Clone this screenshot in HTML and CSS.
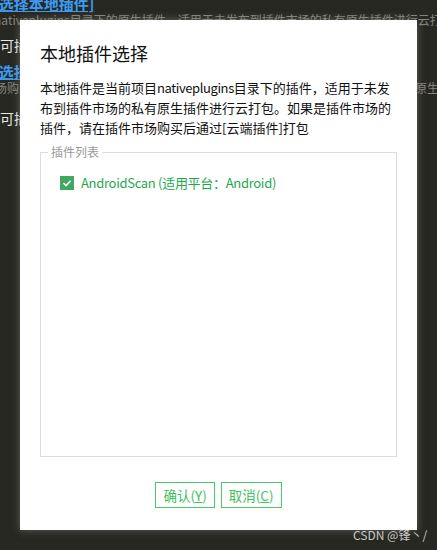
FILE: index.html
```html
<!DOCTYPE html>
<html lang="zh-CN">
  <head>
    <meta charset="UTF-8" />
    <meta name="viewport" content="width=device-width, initial-scale=1.0" />
    <title>本地插件选择</title>
    <link rel="stylesheet" href="styles.css">
  </head>
  <body>
    <div class="page">
      <div class="link first">[选择本地插件]</div>
      <div class="note">nativeplugins目录下的原生插件，适用于未发布到插件市场的私有原生插件进行云打包。</div>
      <div class="label">可插件</div>
      <div class="link">[选择云端插件]</div>
      <div class="note later">场购买后通过云端插件进行打包，已购买的插件会显示在插件的云端列表中，与原生插件</div>
      <div class="label">可插件</div>
    </div>

    <div class="dialog">
      <div class="title">本地插件选择</div>
      <div class="desc">
        本地插件是当前项目<span class="en">nativeplugins</span>目录下的插件，适用于未发布到插件市场的私有原生插件进行云打包。如果是插件市场的插件，请在插件市场购买后通过[云端插件]打包
      </div>
      <fieldset class="list">
        <legend>插件列表</legend>
        <label class="item">
          <span class="check">
            <svg width="14" height="14" viewBox="0 0 14 14">
              <path d="M3.5 7.2 L6 9.6 L10.6 4.8" fill="none" stroke="#fff" stroke-width="1.6" />
            </svg>
          </span>
          AndroidScan (适用平台：Android)
        </label>
      </fieldset>
      <div class="actions">
        <button class="btn">确认(<u>Y</u>)</button>
        <button class="btn">取消(<u>C</u>)</button>
      </div>
    </div>

    <div class="mark">CSDN @锋丶/</div>
  </body>
</html>
```

FILE: styles.css
```css
body {
  margin: 0;
  padding: 0;
  width: 437px;
  height: 550px;
  overflow: hidden;
  position: relative;
  background: #272822;
  font-family: "Noto Sans CJK SC", "Noto Sans", sans-serif;
}

.page {
  white-space: nowrap;
  overflow: hidden;
  font-size: 14px;
}

.link {
  margin: 11px 0 0 -7px;
  line-height: 16px;
  font-size: 15px;
  font-weight: bold;
  color: #3c9cf0;
  text-decoration: underline;
}

.link.first {
  margin-top: -4px;
}

.note {
  margin-left: -6px;
  line-height: 16px;
  font-size: 12px;
  color: #85857f;
}

.note.later {
  margin-left: -5px;
}

.label {
  margin-top: 9px;
  line-height: 16px;
  color: #e8e8e2;
}

.label:last-child {
  margin-top: 14px;
}

.dialog {
  position: absolute;
  left: 20px;
  top: 20px;
  width: 397px;
  height: 510px;
  box-sizing: border-box;
  padding: 21px 20px 22px;
  background: #fff;
  box-shadow: 0 0 8px rgba(140, 140, 135, 0.55);
  display: flex;
  flex-direction: column;
}

.title {
  font-size: 18px;
  line-height: 24px;
  color: #111;
}

.desc {
  margin-top: 13px;
  font-size: 13px;
  line-height: 20px;
  color: #111;
}

.desc .en {
  letter-spacing: -0.4px;
}

.list {
  flex: 1;
  margin: 6px 0 0;
  padding: 14px 19px;
  border: 1px solid #dcdcdc;
  min-width: 0;
}

.list legend {
  margin-left: -12px;
  padding: 0 3px;
  font-size: 12px;
  line-height: 16px;
  color: #999;
}

.item {
  display: flex;
  align-items: center;
  gap: 7px;
  font-size: 13px;
  line-height: 18px;
  letter-spacing: -0.3px;
  color: #1fa94e;
}

.check {
  display: flex;
  width: 14px;
  height: 14px;
  background: #41a862;
}

.actions {
  margin-top: 25px;
  display: flex;
  justify-content: center;
  gap: 6px;
}

.btn {
  height: 26px;
  padding: 0 7px;
  border: 1px solid #4cc86a;
  background: #fff;
  font-family: "Noto Sans CJK SC", "Noto Sans", sans-serif;
  font-size: 13.5px;
  color: #40bf5e;
}

.mark {
  position: absolute;
  left: 353px;
  top: 527px;
  font-size: 12px;
  line-height: 16px;
  color: #c8c8c4;
}
```
